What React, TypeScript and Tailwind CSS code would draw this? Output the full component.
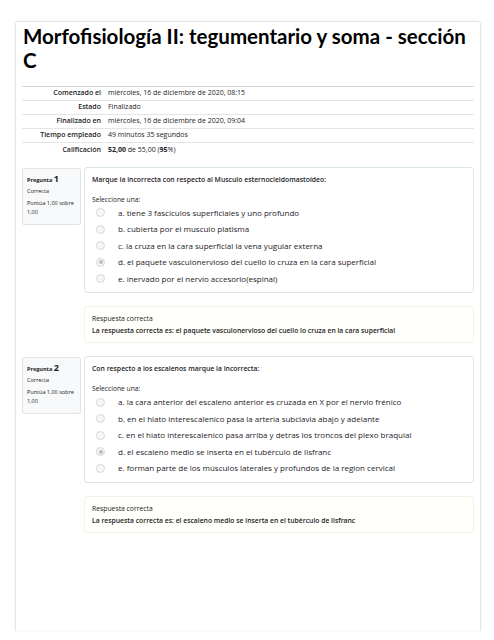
const font = { fontFamily: '"Open Sans", "Noto Sans", sans-serif' };

const summary: [string, React.ReactNode][] = [
  ["Comenzado el", "miércoles, 16 de diciembre de 2020, 08:15"],
  ["Estado", "Finalizado"],
  ["Finalizado en", "miércoles, 16 de diciembre de 2020, 09:04"],
  ["Tiempo empleado", "49 minutos 35 segundos"],
  [
    "Calificación",
    <>
      <b>52,00</b> de 55,00 (<b>95</b>%)
    </>,
  ],
];

type Q = {
  n: number;
  text: string;
  options: string[];
  checked: number;
  answer: string;
};

const questions: Q[] = [
  {
    n: 1,
    text: "Marque la incorrecta con respecto al Musculo esternocleidomastoideo:",
    options: [
      "a. tiene 3 fascículos superficiales y uno profundo",
      "b. cubierta por el musculo platisma",
      "c. la cruza en la cara superficial la vena yugular externa",
      "d. el paquete vasculonervioso del cuello lo cruza en la cara superficial",
      "e. inervado por el nervio accesorio(espinal)",
    ],
    checked: 3,
    answer: "el paquete vasculonervioso del cuello lo cruza en la cara superficial",
  },
  {
    n: 2,
    text: "Con respecto a los escalenos marque la incorrecta:",
    options: [
      "a. la cara anterior del escaleno anterior es cruzada en X por el nervio frénico",
      "b. en el hiato interescalenico pasa la arteria subclavia abajo y adelante",
      "c. en el hiato interescalenico pasa arriba y detras los troncos del plexo braquial",
      "d. el escaleno medio se inserta en el tubérculo de lisfranc",
      "e. forman parte de los músculos laterales y profundos de la region cervical",
    ],
    checked: 3,
    answer: "el escaleno medio se inserta en el tubérculo de lisfranc",
  },
];

function Radio({ on }: { on: boolean }) {
  return (
    <span className="flex h-[9px] w-[9px] items-center justify-center rounded-full border border-[#d6d6d6] bg-[#f7f7f7]">
      {on && <span className="h-[4px] w-[4px] rounded-full bg-[#bdbdbd]" />}
    </span>
  );
}

function Question({ q }: { q: Q }) {
  return (
    <div className="flex flex-col">
      <div className="flex items-start gap-[3px]">
        <div className="mt-[1px] w-[59px] shrink-0 rounded-[2px] border border-[#e3e3e3] bg-[#f8f9fa] px-[4px] pb-[7px] pt-[5px] text-[5.5px] leading-[9px] text-[#222]">
          <div className="font-bold">
            Pregunta <span className="text-[9px]">{q.n}</span>
          </div>
          <div className="mt-[2px]">Correcta</div>
          <div className="mt-[3px] leading-[9px]">Puntúa 1,00 sobre 1,00</div>
        </div>
        <div className="flex-1 rounded-[3px] border border-[#d9e7ec] bg-white pb-[5px] pl-[7px] pt-[7px] text-[#1d2125]">
          <div className="text-[6.85px] font-semibold leading-[9px]">{q.text}</div>
          <div className="mt-[11px] text-[6.7px] leading-[9px]">Seleccione una:</div>
          <div className="mt-[1px] flex flex-col">
            {q.options.map((o, i) => (
              <div key={i} className="flex h-[16.5px] items-center">
                <span className="ml-[4px] w-[22px]">
                  <Radio on={i === q.checked} />
                </span>
                <span className="text-[8px]">{o}</span>
              </div>
            ))}
          </div>
        </div>
      </div>
      <div className="ml-[62px] mt-[13px] rounded-[3px] border border-[#f4f1e6] bg-[#fffffb] px-[7px] pb-[5px] pt-[6px] text-[6.8px] leading-[12px] text-[#1d2125]">
        <div>Respuesta correcta</div>
        <div className="font-semibold">La respuesta correcta es: {q.answer}</div>
      </div>
    </div>
  );
}

export default function App() {
  return (
    <div className="h-[640px] overflow-hidden bg-white" style={font}>
      <div className="ml-[15px] mt-[21px] h-[610px] w-[466px] rounded-t-[3px] border border-b-0 border-[#e6e6e6] px-[6px] shadow-[0_0_3px_rgba(0,0,0,0.06)]">
        <h1
          className="pl-[1px] pt-[2px] text-[20.5px] font-bold leading-[24px] text-black"
          style={{ fontFamily: 'Lato, "Open Sans", sans-serif' }}
        >
          Morfofisiología II: tegumentario y soma - sección C
        </h1>
        <table className="mt-[14px] w-full border-t border-[#d4d4d4] text-[7px] text-[#1d2125]">
          <tbody>
            {summary.map(([k, v]) => (
              <tr key={k} className="h-[14px] border-b border-[#e4e4e4] last:border-b-0">
                <th className="w-[86px] pr-[7px] text-right font-semibold">{k}</th>
                <td>{v}</td>
              </tr>
            ))}
          </tbody>
        </table>
        <div className="mt-[10px] flex flex-col gap-[13px]">
          {questions.map((q) => (
            <Question key={q.n} q={q} />
          ))}
        </div>
      </div>
    </div>
  );
}
